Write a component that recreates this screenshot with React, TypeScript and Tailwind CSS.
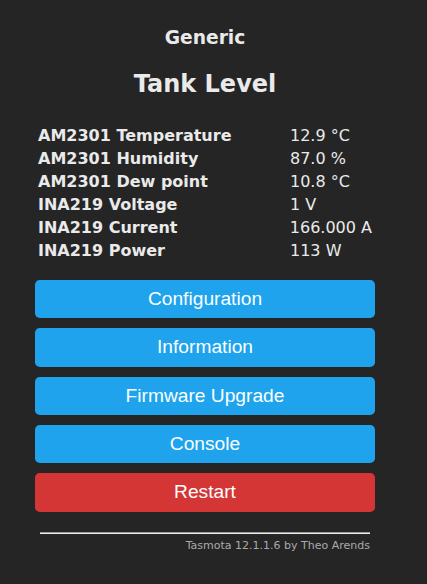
import React from 'react';

const readings = [
  ['AM2301 Temperature', '12.9 °C'],
  ['AM2301 Humidity', '87.0 %'],
  ['AM2301 Dew point', '10.8 °C'],
  ['INA219 Voltage', '1 V'],
  ['INA219 Current', '166.000 A'],
  ['INA219 Power', '113 W'],
];

const buttons = ['Configuration', 'Information', 'Firmware Upgrade', 'Console'];

export default function App() {
  return (
    <div className="min-h-[584px] bg-[#252525] text-[#eaeaea] font-['DejaVu_Sans',Verdana,sans-serif]">
      <div className="ml-[35px] w-[340px] pt-[27px]">
        {/* Header */}
        <div className="flex flex-col items-center">
          <h3 className="text-[18.7px] font-bold leading-[22px]">Generic</h3>
          <h2 className="mt-[21px] text-[24px] font-bold leading-[28px]">Tank Level</h2>
        </div>

        {/* Sensor table */}
        <div className="mt-[26px] flex flex-col px-[3px] text-[16px] leading-[19px]">
          {readings.map(([name, value]) => (
            <div key={name} className="flex h-[23px] items-center whitespace-nowrap">
              <span className="w-[252px] font-bold">{name}</span>
              <span>{value}</span>
            </div>
          ))}
        </div>

        {/* Buttons */}
        <div className="mt-[18px] flex flex-col gap-[9.9px] font-['Liberation_Sans',Arial,sans-serif] text-[19.2px] text-[#faffff]">
          {buttons.map((b) => (
            <button key={b} className="h-[38.4px] w-full rounded-[4.8px] bg-[#1fa3ec] leading-[38.4px]">
              {b}
            </button>
          ))}
          <button className="h-[38.4px] w-full rounded-[4.8px] bg-[#d43535] leading-[38.4px]">Restart</button>
        </div>

        {/* Footer */}
        <div className="mt-[20px] px-[5px] text-right text-[11px]">
          <hr className="border-t border-b border-t-[#9a9a9a] border-b-[#eeeeee]" />
          <div className="mt-[4px] text-[#aaaaaa]">Tasmota 12.1.1.6 by Theo Arends</div>
        </div>
      </div>
    </div>
  );
}
